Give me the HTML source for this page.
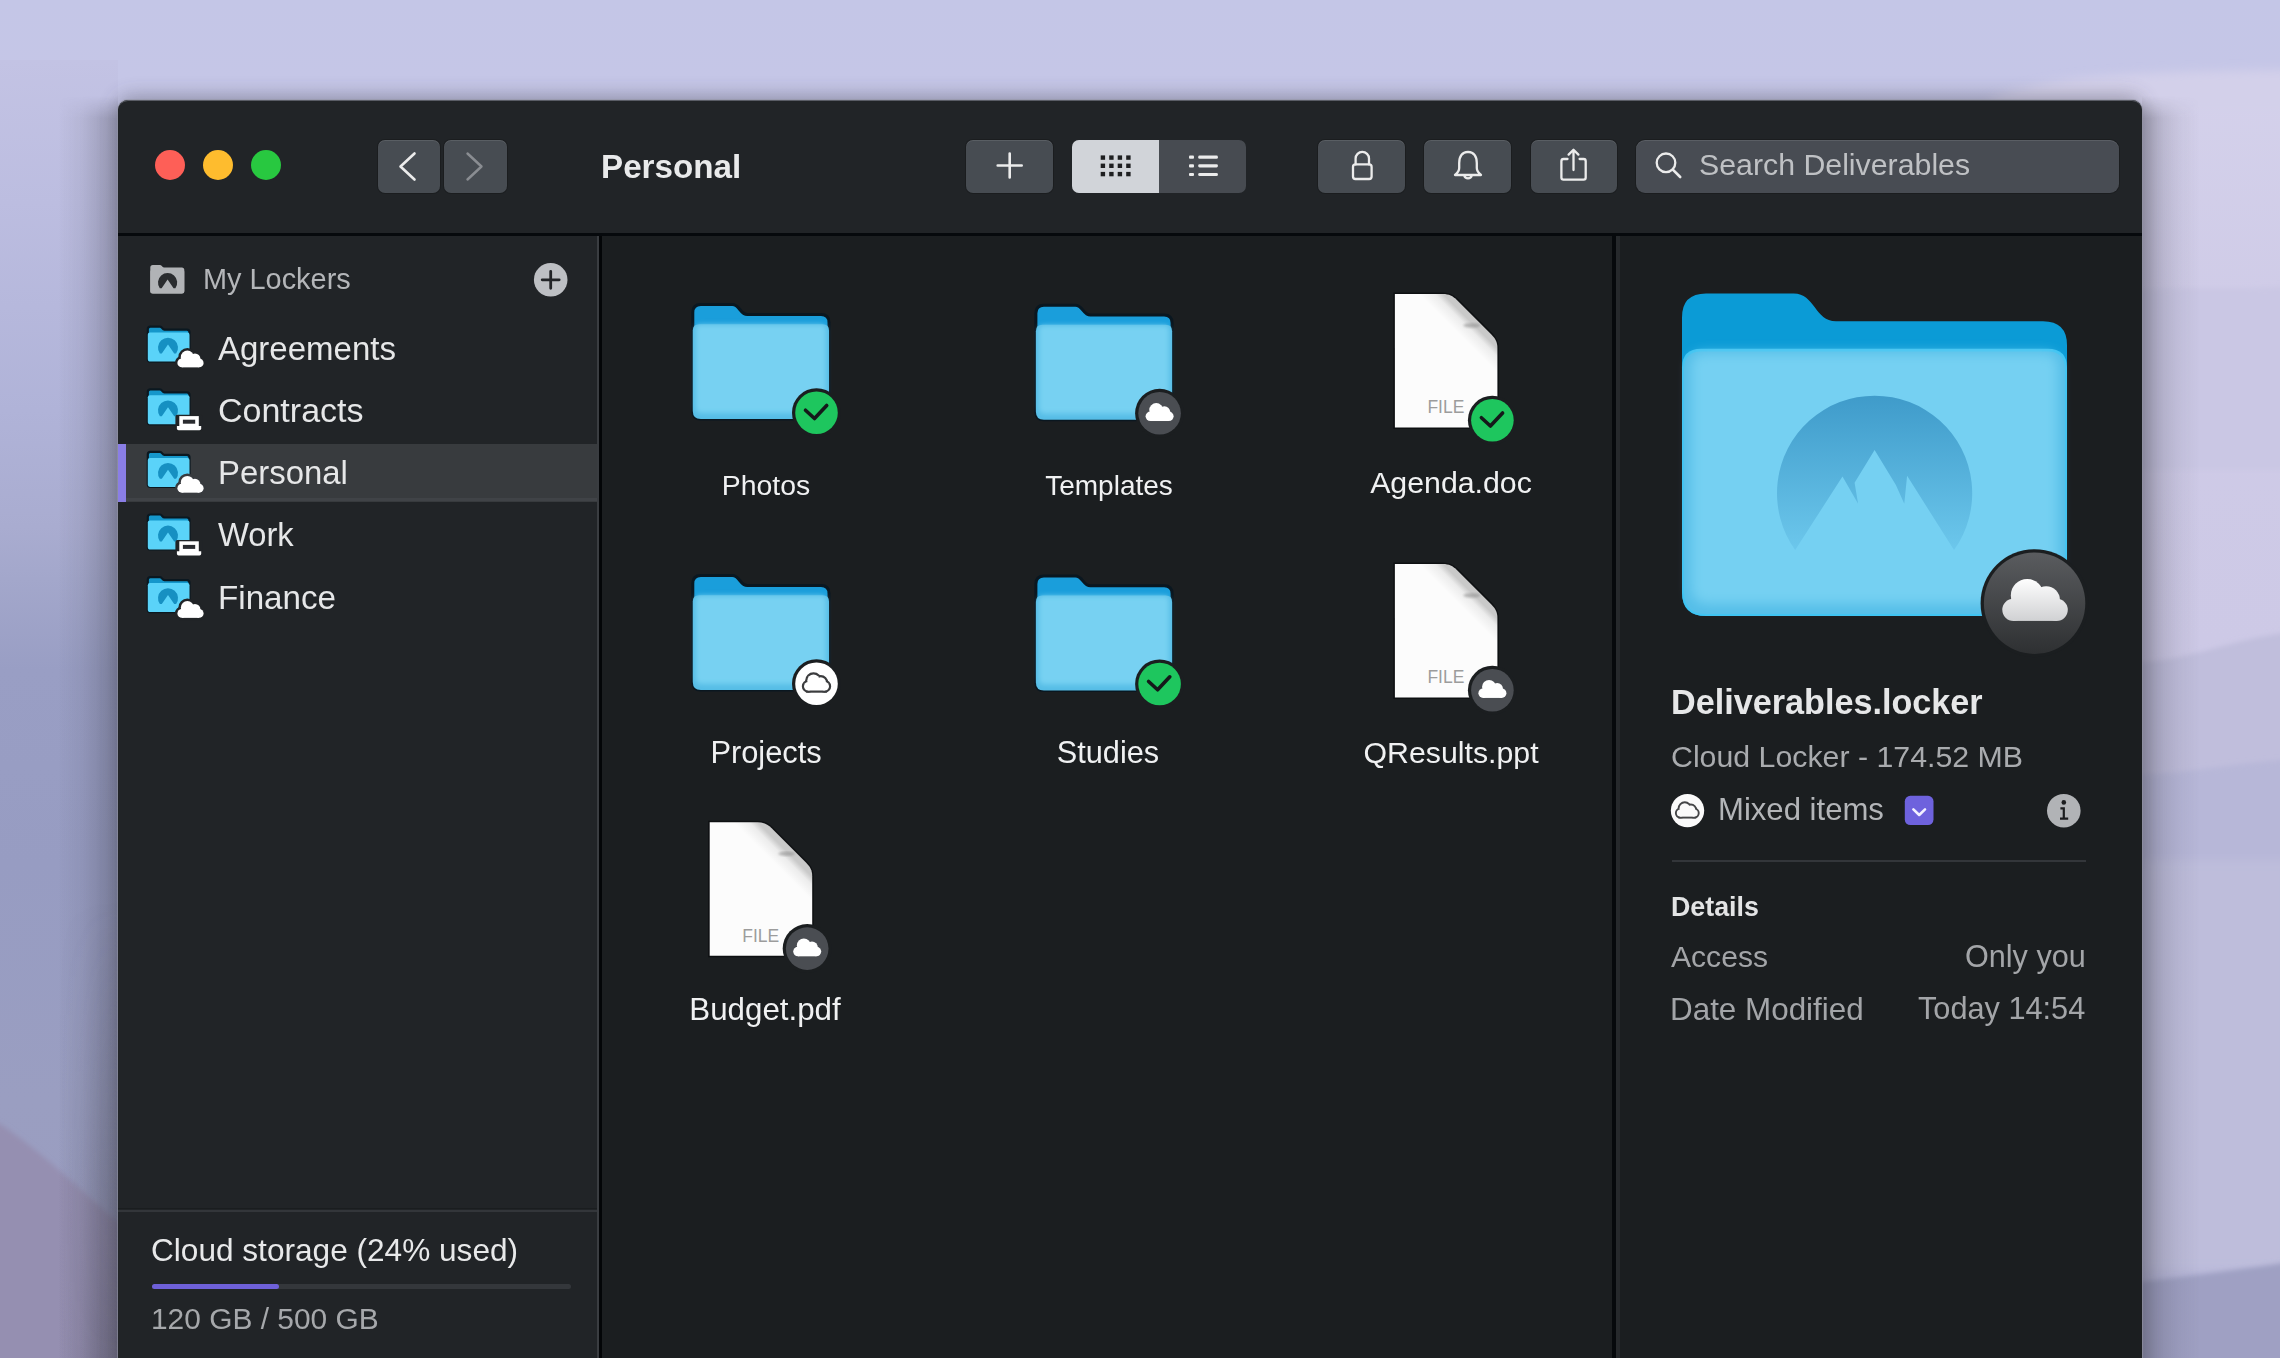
<!DOCTYPE html>
<html><head><meta charset="utf-8">
<style>
*{margin:0;padding:0;box-sizing:border-box}
html,body{width:2280px;height:1358px;overflow:hidden;background:#c0c0e0}
body{position:relative;font-family:"Liberation Sans",sans-serif}
.abs{position:absolute}
.t{position:absolute;white-space:nowrap;line-height:1;will-change:transform}
#win{position:absolute;left:118px;top:100px;width:2024px;height:1300px;border-radius:10px;background:#1b1e20}
</style></head><body>
<svg class="abs" style="left:0;top:0" width="2280" height="1358" viewBox="0 0 2280 1358">
<defs>
<linearGradient id="sky" x1="0" y1="0" x2="0" y2="1">
<stop offset="0" stop-color="#c4c6e7"/><stop offset=".06" stop-color="#c5c6e7"/><stop offset=".2" stop-color="#c3c3e3"/><stop offset=".5" stop-color="#bdbcdc"/><stop offset="1" stop-color="#acaacb"/>
</linearGradient>
<linearGradient id="leftG" gradientUnits="userSpaceOnUse" x1="0" y1="60" x2="0" y2="1358">
<stop offset="0" stop-color="#c3c3e4"/><stop offset=".11" stop-color="#bcbde0"/><stop offset=".27" stop-color="#b0b3d8"/><stop offset=".36" stop-color="#a9acd0"/><stop offset=".4" stop-color="#a3a7cb"/><stop offset=".47" stop-color="#999ec4"/><stop offset=".62" stop-color="#979cc2"/><stop offset=".8" stop-color="#9a9ec1"/><stop offset="1" stop-color="#9a9cbf"/>
</linearGradient>
<linearGradient id="rightG" gradientUnits="userSpaceOnUse" x1="0" y1="60" x2="0" y2="1358">
<stop offset="0" stop-color="#c8c8e7"/><stop offset=".015" stop-color="#d4d1eb"/><stop offset=".2" stop-color="#cfcbe7"/><stop offset=".45" stop-color="#cdc9e6"/><stop offset="1" stop-color="#c9c6e3"/>
</linearGradient>
<linearGradient id="shL" gradientUnits="userSpaceOnUse" x1="118" y1="0" x2="58" y2="0">
<stop offset="0" stop-color="#3a3a44" stop-opacity=".28"/><stop offset=".15" stop-color="#3a3a44" stop-opacity=".24"/><stop offset=".3" stop-color="#3a3a44" stop-opacity=".2"/><stop offset=".6" stop-color="#3a3a44" stop-opacity=".08"/><stop offset="1" stop-color="#3a3a44" stop-opacity="0"/>
</linearGradient>
<linearGradient id="shLb" gradientUnits="userSpaceOnUse" x1="0" y1="900" x2="0" y2="1358">
<stop offset="0" stop-color="#fff" stop-opacity="0"/><stop offset="1" stop-color="#fff" stop-opacity="1"/>
</linearGradient>
<linearGradient id="fadeTop" gradientUnits="userSpaceOnUse" x1="0" y1="96" x2="0" y2="118"><stop offset="0" stop-color="#fff" stop-opacity="0"/><stop offset="1" stop-color="#fff" stop-opacity="1"/></linearGradient>
<mask id="mTop"><rect x="0" y="0" width="2280" height="1358" fill="url(#fadeTop)"/></mask>
<mask id="mLb"><rect x="0" y="900" width="130" height="458" fill="url(#shLb)"/></mask>
<linearGradient id="shR" gradientUnits="userSpaceOnUse" x1="2142" y1="0" x2="2200" y2="0">
<stop offset="0" stop-color="#3a3a44" stop-opacity=".3"/><stop offset=".15" stop-color="#3a3a44" stop-opacity=".26"/><stop offset=".35" stop-color="#3a3a44" stop-opacity=".16"/><stop offset=".65" stop-color="#3a3a44" stop-opacity=".06"/><stop offset="1" stop-color="#3a3a44" stop-opacity="0"/>
</linearGradient>
<linearGradient id="shT" gradientUnits="userSpaceOnUse" x1="0" y1="100" x2="0" y2="70">
<stop offset="0" stop-color="#3a3a44" stop-opacity=".14"/><stop offset="1" stop-color="#3a3a44" stop-opacity="0"/>
</linearGradient>
<filter id="blS" x="-5%" y="-5%" width="110%" height="110%"><feGaussianBlur stdDeviation="10"/></filter>
<filter id="bl" x="-50%" y="-50%" width="200%" height="200%"><feGaussianBlur stdDeviation="5"/></filter>
<filter id="bl3" x="-50%" y="-50%" width="200%" height="200%"><feGaussianBlur stdDeviation="2.5"/></filter>
</defs>
<rect width="2280" height="1358" fill="url(#sky)"/>
<rect x="0" y="60" width="118" height="1298" fill="url(#leftG)"/>
<path d="M-20,1118 L0,1124 C40,1150 80,1190 125,1228 L125,1380 L-20,1380 Z" fill="#958fb1" filter="url(#bl3)"/>
<rect x="2142" y="100" width="138" height="1258" fill="url(#rightG)"/>
<path d="M1990,100 C2040,78 2100,72 2290,70 L2290,110 L1990,110 Z" fill="#d3d0ea" filter="url(#bl)"/>
<path d="M2140,290 C2180,286 2230,290 2290,286 L2290,470 L2140,470 Z" fill="#cac7e4" filter="url(#bl3)"/>
<path d="M2140,662 C2190,660 2230,640 2290,632 L2290,780 L2140,780 Z" fill="#c0bedc" filter="url(#bl3)"/>
<path d="M2140,775 C2200,772 2240,762 2290,760 L2290,1300 L2140,1300 Z" fill="#b7b7d8" filter="url(#bl3)"/>
<path d="M2140,860 L2290,860 L2290,1270 L2140,1270 Z" fill="#bebddb" filter="url(#bl)"/>
<path d="M2140,1282 C2200,1275 2250,1268 2290,1262 L2290,1380 L2140,1380 Z" fill="#9fa0c3" filter="url(#bl3)"/>
<rect x="118" y="97" width="2024" height="1300" rx="12" fill="#3a3a44" opacity=".42" filter="url(#blS)"/>
<rect x="0" y="90" width="118" height="1268" fill="url(#shL)" mask="url(#mTop)"/>
<rect x="0" y="900" width="118" height="458" fill="url(#shL)" mask="url(#mLb)"/>
<rect x="2142" y="90" width="138" height="1268" fill="url(#shR)" mask="url(#mTop)"/>

</svg>
<div class="abs" style="left:117px;top:99px;width:2026px;height:1300px;border-radius:11px;background:rgba(150,152,166,.55)"></div>
<div id="win"></div>
<div class="abs" style="left:118px;top:100px;width:2024px;height:135px;border-radius:10px 10px 0 0;background:#212427;border-top:1px solid #5a5d66"></div>
<div class="abs" style="left:118px;top:233px;width:2024px;height:3px;background:#06090c"></div>
<div class="abs" style="left:118px;top:236px;width:479px;height:1122px;background:#212427"></div>
<div class="abs" style="left:597px;top:236px;width:2px;height:1122px;background:#3a3d41"></div>
<div class="abs" style="left:599px;top:236px;width:3px;height:1122px;background:#030507"></div>
<div class="abs" style="left:1612px;top:236px;width:4px;height:1122px;background:#06090c"></div>
<div class="abs" style="left:1616px;top:236px;width:4px;height:1122px;background:#26292c"></div>
<div class="abs" style="left:118px;top:443.5px;width:479px;height:58.5px;background:#383b3e"></div><div class="abs" style="left:118px;top:498px;width:479px;height:3px;background:#404347"></div>
<div class="abs" style="left:118px;top:444px;width:8px;height:58px;background:#8a7ee6"></div>
<div class="abs" style="left:154.7px;top:150px;width:30px;height:30px;border-radius:50%;background:#fe5f57"></div>
<div class="abs" style="left:202.8px;top:150px;width:30px;height:30px;border-radius:50%;background:#febc2e"></div>
<div class="abs" style="left:251.2px;top:150px;width:30px;height:30px;border-radius:50%;background:#28c840"></div>
<div class="abs" style="left:377.5px;top:139.7px;width:62.5px;height:53.3px;background:#474c52;border-radius:7px;box-shadow:inset 0 1px 0 rgba(255,255,255,.1),0 0 0 1px rgba(0,0,0,.18)"></div>
<div class="abs" style="left:444.2px;top:139.7px;width:63.3px;height:53.3px;background:#474c52;border-radius:7px;box-shadow:inset 0 1px 0 rgba(255,255,255,.1),0 0 0 1px rgba(0,0,0,.18)"></div>
<div class="abs" style="left:966px;top:139.7px;width:86.8px;height:53.3px;background:#474c52;border-radius:7px;box-shadow:inset 0 1px 0 rgba(255,255,255,.1),0 0 0 1px rgba(0,0,0,.18)"></div>
<div class="abs" style="left:1072px;top:139.7px;width:173.5px;height:53.3px;background:#474b51;border-radius:7px;overflow:hidden"><div class="abs" style="left:0;top:0;width:87px;height:54px;background:#d1d4d9"></div></div>
<div class="abs" style="left:1317.7px;top:139.7px;width:87px;height:53.3px;background:#474c52;border-radius:7px;box-shadow:inset 0 1px 0 rgba(255,255,255,.1),0 0 0 1px rgba(0,0,0,.18)"></div>
<div class="abs" style="left:1424.4px;top:139.7px;width:86.3px;height:53.3px;background:#474c52;border-radius:7px;box-shadow:inset 0 1px 0 rgba(255,255,255,.1),0 0 0 1px rgba(0,0,0,.18)"></div>
<div class="abs" style="left:1531px;top:139.7px;width:85.7px;height:53.3px;background:#474c52;border-radius:7px;box-shadow:inset 0 1px 0 rgba(255,255,255,.1),0 0 0 1px rgba(0,0,0,.18)"></div>
<div class="abs" style="left:1636.4px;top:139.7px;width:482.6px;height:53.3px;background:#484c53;border-radius:9px;box-shadow:inset 0 1px 0 rgba(255,255,255,.1),0 0 0 1px rgba(0,0,0,.18)"></div>
<svg class="abs" style="left:0;top:0" width="2280" height="1358" viewBox="0 0 2280 1358"><defs><filter id="fb2" x="-20%" y="-20%" width="140%" height="140%"><feGaussianBlur stdDeviation="2.5"/></filter><filter id="fb6" x="-20%" y="-20%" width="140%" height="140%"><feGaussianBlur stdDeviation="6"/></filter><filter id="fb1"><feGaussianBlur stdDeviation="1.2"/></filter><linearGradient id="logoG" x1="0" y1="0" x2="0" y2="1"><stop offset="0" stop-color="#3f9bca"/><stop offset="1" stop-color="#6cc7ec"/></linearGradient><linearGradient id="bigBadge" x1="0" y1="0" x2="0" y2="1"><stop offset="0" stop-color="#5a5c5f"/><stop offset="1" stop-color="#2e3032"/></linearGradient><linearGradient id="bigCloud" gradientUnits="userSpaceOnUse" x1="0" y1="578" x2="0" y2="622"><stop offset="0" stop-color="#ffffff"/><stop offset="1" stop-color="#cfd0d2"/></linearGradient></defs><g fill="none" stroke-linecap="round" stroke-linejoin="round"><polyline points="414.5,153.5 400.5,166.5 414.5,179.5" stroke="#ececec" stroke-width="2.6"/><polyline points="467.5,153.5 481.5,166.5 467.5,179.5" stroke="#8a8d92" stroke-width="2.4"/><path d="M997.7,165.5 H1021.7 M1009.7,153.5 V177.5" stroke="#ececec" stroke-width="2.6"/></g><rect x="1100.7" y="155.4" width="4.4" height="4.4" fill="#1d1e20"/><rect x="1100.7" y="163.6" width="4.4" height="4.4" fill="#1d1e20"/><rect x="1100.7" y="171.9" width="4.4" height="4.4" fill="#1d1e20"/><rect x="1109.2" y="155.4" width="4.4" height="4.4" fill="#1d1e20"/><rect x="1109.2" y="163.6" width="4.4" height="4.4" fill="#1d1e20"/><rect x="1109.2" y="171.9" width="4.4" height="4.4" fill="#1d1e20"/><rect x="1117.7" y="155.4" width="4.4" height="4.4" fill="#1d1e20"/><rect x="1117.7" y="163.6" width="4.4" height="4.4" fill="#1d1e20"/><rect x="1117.7" y="171.9" width="4.4" height="4.4" fill="#1d1e20"/><rect x="1126.2" y="155.4" width="4.4" height="4.4" fill="#1d1e20"/><rect x="1126.2" y="163.6" width="4.4" height="4.4" fill="#1d1e20"/><rect x="1126.2" y="171.9" width="4.4" height="4.4" fill="#1d1e20"/><rect x="1189" y="155.6" width="5" height="3.2" rx="1" fill="#ececec"/><rect x="1198.2" y="155.6" width="19.7" height="3.2" rx="1.4" fill="#ececec"/><rect x="1189" y="164.2" width="5" height="3.2" rx="1" fill="#ececec"/><rect x="1198.2" y="164.2" width="19.7" height="3.2" rx="1.4" fill="#ececec"/><rect x="1189" y="172.9" width="5" height="3.2" rx="1" fill="#ececec"/><rect x="1198.2" y="172.9" width="19.7" height="3.2" rx="1.4" fill="#ececec"/><g fill="none" stroke="#ececec" stroke-width="2.3" stroke-linecap="round" stroke-linejoin="round"><path d="M1355.6,164.4 V158.6 A6.7,6.7 0 0 1 1369,158.6 V164.4"/><rect x="1353" y="164.4" width="18.6" height="14.6" rx="2.5"/><path d="M1468,151.8 C1461.5,152.3 1459.2,157.5 1459.2,163 V168 C1459.2,171 1457.5,173 1455,175 H1481 C1478.5,173 1476.8,171 1476.8,168 V163 C1476.8,157.5 1474.5,152.3 1468,151.8 Z"/><path d="M1464.3,175.5 A3.8,3.8 0 0 0 1471.7,175.5"/><path d="M1567.5,159 H1563.5 Q1561.4,159 1561.4,161.2 V177.6 Q1561.4,179.7 1563.5,179.7 H1583.6 Q1585.7,179.7 1585.7,177.6 V161.2 Q1585.7,159 1583.6,159 H1579.6"/><path d="M1573.5,170 V149.8 M1568.6,154.6 L1573.5,149.8 L1578.4,154.6"/><circle cx="1666" cy="162.8" r="9.3"/><path d="M1672.8,169.6 L1680.2,177" stroke-width="2.6"/></g><path d="M150.30,290.90 V267.50 Q150.30,265.00 152.80,265.00 H160.16 C162.03,265.00 162.03,267.44 163.90,267.44 H181.80 Q184.30,267.44 184.30,269.94 V290.90 Q184.30,293.40 181.80,293.40 H152.80 Q150.30,293.40 150.30,290.90 Z" fill="#b1b3b6"/><path d="M150.30,271.86 Q150.30,269.86 152.30,269.86 H182.30 Q184.30,269.86 184.30,271.86 V290.90 Q184.30,293.40 181.80,293.40 H152.80 Q150.30,293.40 150.30,290.90 Z" fill="#b1b3b6"/><path d="M159.79,288.21 A9.60,9.60 0 1 1 175.41,288.21 L173.55,288.21 L167.60,279.53 L161.65,288.21 Z" fill="#2a2c2f"/><circle cx="550.7" cy="279.8" r="16.8" fill="#bdbfc3"/><path d="M542.2,279.8 H559.2 M550.7,271.3 V288.3" stroke="#222427" stroke-width="2.8" stroke-linecap="round"/><path d="M147.80,359.00 V329.20 Q147.80,326.60 150.40,326.60 H159.89 C162.19,326.60 162.19,329.61 164.48,329.61 H186.90 Q189.50,329.61 189.50,332.21 V359.00 Q189.50,361.60 186.90,361.60 H150.40 Q147.80,361.60 147.80,359.00 Z" fill="#1597cb" stroke="#0b1820" stroke-width="2.2"/><path d="M147.80,334.67 Q147.80,332.59 149.88,332.59 H187.42 Q189.50,332.59 189.50,334.67 V359.00 Q189.50,361.60 186.90,361.60 H150.40 Q147.80,361.60 147.80,359.00 Z" fill="#5ad3f9"/><path d="M159.87,353.54 A10.00,10.00 0 1 1 176.13,353.54 L174.20,353.54 L168.00,344.50 L161.80,353.54 Z" fill="#1690c2"/><circle cx="181.85" cy="362.91" r="4.45" fill="#212427" stroke="#212427" stroke-width="5"/><circle cx="187.36" cy="357.15" r="6.55" fill="#212427" stroke="#212427" stroke-width="5"/><circle cx="194.95" cy="358.98" r="5.50" fill="#212427" stroke="#212427" stroke-width="5"/><circle cx="199.15" cy="362.91" r="4.45" fill="#212427" stroke="#212427" stroke-width="5"/><rect x="181.85" y="361.08" width="17.29" height="6.29" fill="#212427" stroke="#212427" stroke-width="5"/><circle cx="181.85" cy="362.91" r="4.45" fill="#ffffff"/><circle cx="187.36" cy="357.15" r="6.55" fill="#ffffff"/><circle cx="194.95" cy="358.98" r="5.50" fill="#ffffff"/><circle cx="199.15" cy="362.91" r="4.45" fill="#ffffff"/><rect x="181.85" y="361.08" width="17.29" height="6.29" fill="#ffffff"/><path d="M147.80,421.70 V391.90 Q147.80,389.30 150.40,389.30 H159.89 C162.19,389.30 162.19,392.31 164.48,392.31 H186.90 Q189.50,392.31 189.50,394.91 V421.70 Q189.50,424.30 186.90,424.30 H150.40 Q147.80,424.30 147.80,421.70 Z" fill="#1597cb" stroke="#0b1820" stroke-width="2.2"/><path d="M147.80,397.37 Q147.80,395.29 149.88,395.29 H187.42 Q189.50,395.29 189.50,397.37 V421.70 Q189.50,424.30 186.90,424.30 H150.40 Q147.80,424.30 147.80,421.70 Z" fill="#5ad3f9"/><path d="M159.87,416.24 A10.00,10.00 0 1 1 176.13,416.24 L174.20,416.24 L168.00,407.20 L161.80,416.24 Z" fill="#1690c2"/><rect x="175.4" y="414.8" width="27.5" height="16.5" rx="2" fill="#212427"/><rect x="181.1" y="417.9" width="15.9" height="7.6" fill="#2a2c30" stroke="#ffffff" stroke-width="3.6"/><path d="M176.9,426.0 H201.2 V428.5 Q201.2,430.2 199.5,430.2 H178.6 Q176.9,430.2 176.9,428.5 Z" fill="#ffffff"/><path d="M147.80,484.30 V454.50 Q147.80,451.90 150.40,451.90 H159.89 C162.19,451.90 162.19,454.91 164.48,454.91 H186.90 Q189.50,454.91 189.50,457.51 V484.30 Q189.50,486.90 186.90,486.90 H150.40 Q147.80,486.90 147.80,484.30 Z" fill="#1597cb" stroke="#0b1820" stroke-width="2.2"/><path d="M147.80,459.96 Q147.80,457.88 149.88,457.88 H187.42 Q189.50,457.88 189.50,459.96 V484.30 Q189.50,486.90 186.90,486.90 H150.40 Q147.80,486.90 147.80,484.30 Z" fill="#5ad3f9"/><path d="M159.87,478.84 A10.00,10.00 0 1 1 176.13,478.84 L174.20,478.84 L168.00,469.80 L161.80,478.84 Z" fill="#1690c2"/><circle cx="181.85" cy="488.21" r="4.45" fill="#383b3f" stroke="#383b3f" stroke-width="5"/><circle cx="187.36" cy="482.45" r="6.55" fill="#383b3f" stroke="#383b3f" stroke-width="5"/><circle cx="194.95" cy="484.28" r="5.50" fill="#383b3f" stroke="#383b3f" stroke-width="5"/><circle cx="199.15" cy="488.21" r="4.45" fill="#383b3f" stroke="#383b3f" stroke-width="5"/><rect x="181.85" y="486.38" width="17.29" height="6.29" fill="#383b3f" stroke="#383b3f" stroke-width="5"/><circle cx="181.85" cy="488.21" r="4.45" fill="#ffffff"/><circle cx="187.36" cy="482.45" r="6.55" fill="#ffffff"/><circle cx="194.95" cy="484.28" r="5.50" fill="#ffffff"/><circle cx="199.15" cy="488.21" r="4.45" fill="#ffffff"/><rect x="181.85" y="486.38" width="17.29" height="6.29" fill="#ffffff"/><path d="M147.80,546.90 V517.10 Q147.80,514.50 150.40,514.50 H159.89 C162.19,514.50 162.19,517.51 164.48,517.51 H186.90 Q189.50,517.51 189.50,520.11 V546.90 Q189.50,549.50 186.90,549.50 H150.40 Q147.80,549.50 147.80,546.90 Z" fill="#1597cb" stroke="#0b1820" stroke-width="2.2"/><path d="M147.80,522.57 Q147.80,520.49 149.88,520.49 H187.42 Q189.50,520.49 189.50,522.57 V546.90 Q189.50,549.50 186.90,549.50 H150.40 Q147.80,549.50 147.80,546.90 Z" fill="#5ad3f9"/><path d="M159.87,541.44 A10.00,10.00 0 1 1 176.13,541.44 L174.20,541.44 L168.00,532.40 L161.80,541.44 Z" fill="#1690c2"/><rect x="175.4" y="540.0" width="27.5" height="16.5" rx="2" fill="#212427"/><rect x="181.1" y="543.1" width="15.9" height="7.6" fill="#2a2c30" stroke="#ffffff" stroke-width="3.6"/><path d="M176.9,551.2 H201.2 V553.7 Q201.2,555.4 199.5,555.4 H178.6 Q176.9,555.4 176.9,553.7 Z" fill="#ffffff"/><path d="M147.80,609.50 V579.70 Q147.80,577.10 150.40,577.10 H159.89 C162.19,577.10 162.19,580.11 164.48,580.11 H186.90 Q189.50,580.11 189.50,582.71 V609.50 Q189.50,612.10 186.90,612.10 H150.40 Q147.80,612.10 147.80,609.50 Z" fill="#1597cb" stroke="#0b1820" stroke-width="2.2"/><path d="M147.80,585.17 Q147.80,583.09 149.88,583.09 H187.42 Q189.50,583.09 189.50,585.17 V609.50 Q189.50,612.10 186.90,612.10 H150.40 Q147.80,612.10 147.80,609.50 Z" fill="#5ad3f9"/><path d="M159.87,604.04 A10.00,10.00 0 1 1 176.13,604.04 L174.20,604.04 L168.00,595.00 L161.80,604.04 Z" fill="#1690c2"/><circle cx="181.85" cy="613.41" r="4.45" fill="#212427" stroke="#212427" stroke-width="5"/><circle cx="187.36" cy="607.65" r="6.55" fill="#212427" stroke="#212427" stroke-width="5"/><circle cx="194.95" cy="609.48" r="5.50" fill="#212427" stroke="#212427" stroke-width="5"/><circle cx="199.15" cy="613.41" r="4.45" fill="#212427" stroke="#212427" stroke-width="5"/><rect x="181.85" y="611.58" width="17.29" height="6.29" fill="#212427" stroke="#212427" stroke-width="5"/><circle cx="181.85" cy="613.41" r="4.45" fill="#ffffff"/><circle cx="187.36" cy="607.65" r="6.55" fill="#ffffff"/><circle cx="194.95" cy="609.48" r="5.50" fill="#ffffff"/><circle cx="199.15" cy="613.41" r="4.45" fill="#ffffff"/><rect x="181.85" y="611.58" width="17.29" height="6.29" fill="#ffffff"/><path d="M692.80,411.10 V312.60 Q692.80,304.60 700.80,304.60 H732.30 C739.79,304.60 739.79,314.45 747.28,314.45 H821.00 Q829.00,314.45 829.00,322.45 V411.10 Q829.00,419.10 821.00,419.10 H700.80 Q692.80,419.10 692.80,411.10 Z" fill="#1a9edb" stroke="#0a1720" stroke-width="3"/><path d="M692.80,330.58 Q692.80,324.18 699.20,324.18 H822.60 Q829.00,324.18 829.00,330.58 V411.10 Q829.00,419.10 821.00,419.10 H700.80 Q692.80,419.10 692.80,411.10 Z" fill="#56bde6"/><path d="M695.80,329.61 Q695.80,324.81 700.60,324.81 H821.20 Q826.00,324.81 826.00,329.61 V407.10 Q826.00,413.10 820.00,413.10 H701.80 Q695.80,413.10 695.80,407.10 Z" fill="#77d1f2" filter="url(#fb2)"/><circle cx="816.5" cy="412.7" r="24.5" fill="#1b1e20"/><circle cx="816.5" cy="412.7" r="21.3" fill="#1ec65e"/><polyline points="805.5,410.2 814.5,418.5 826.7,405.5" fill="none" stroke="#15181a" stroke-width="3.6" stroke-linecap="round" stroke-linejoin="round"/><path d="M1035.90,411.70 V313.20 Q1035.90,305.20 1043.90,305.20 H1075.40 C1082.89,305.20 1082.89,315.05 1090.38,315.05 H1164.10 Q1172.10,315.05 1172.10,323.05 V411.70 Q1172.10,419.70 1164.10,419.70 H1043.90 Q1035.90,419.70 1035.90,411.70 Z" fill="#1a9edb" stroke="#0a1720" stroke-width="3"/><path d="M1035.90,331.18 Q1035.90,324.78 1042.30,324.78 H1165.70 Q1172.10,324.78 1172.10,331.18 V411.70 Q1172.10,419.70 1164.10,419.70 H1043.90 Q1035.90,419.70 1035.90,411.70 Z" fill="#56bde6"/><path d="M1038.90,330.21 Q1038.90,325.41 1043.70,325.41 H1164.30 Q1169.10,325.41 1169.10,330.21 V407.70 Q1169.10,413.70 1163.10,413.70 H1044.90 Q1038.90,413.70 1038.90,407.70 Z" fill="#77d1f2" filter="url(#fb2)"/><circle cx="1159.6" cy="413.3" r="24.5" fill="#1b1e20"/><circle cx="1159.6" cy="413.3" r="21.3" fill="#4a4d52"/><circle cx="1150.36" cy="416.26" r="4.76" fill="#ffffff"/><circle cx="1156.24" cy="410.10" r="7.00" fill="#ffffff"/><circle cx="1164.36" cy="412.06" r="5.88" fill="#ffffff"/><circle cx="1168.84" cy="416.26" r="4.76" fill="#ffffff"/><rect x="1150.36" y="414.30" width="18.48" height="6.72" fill="#ffffff"/><path d="M692.80,682.10 V583.60 Q692.80,575.60 700.80,575.60 H732.30 C739.79,575.60 739.79,585.45 747.28,585.45 H821.00 Q829.00,585.45 829.00,593.45 V682.10 Q829.00,690.10 821.00,690.10 H700.80 Q692.80,690.10 692.80,682.10 Z" fill="#1a9edb" stroke="#0a1720" stroke-width="3"/><path d="M692.80,601.58 Q692.80,595.18 699.20,595.18 H822.60 Q829.00,595.18 829.00,601.58 V682.10 Q829.00,690.10 821.00,690.10 H700.80 Q692.80,690.10 692.80,682.10 Z" fill="#56bde6"/><path d="M695.80,600.61 Q695.80,595.81 700.60,595.81 H821.20 Q826.00,595.81 826.00,600.61 V678.10 Q826.00,684.10 820.00,684.10 H701.80 Q695.80,684.10 695.80,678.10 Z" fill="#77d1f2" filter="url(#fb2)"/><circle cx="816.5" cy="683.7" r="24.5" fill="#1b1e20"/><circle cx="816.5" cy="683.7" r="21.3" fill="#ffffff"/><circle cx="808.25" cy="686.25" r="4.25" fill="#3b3c3e" stroke="#3b3c3e" stroke-width="4.4"/><circle cx="813.50" cy="680.75" r="6.25" fill="#3b3c3e" stroke="#3b3c3e" stroke-width="4.4"/><circle cx="820.75" cy="682.50" r="5.25" fill="#3b3c3e" stroke="#3b3c3e" stroke-width="4.4"/><circle cx="824.75" cy="686.25" r="4.25" fill="#3b3c3e" stroke="#3b3c3e" stroke-width="4.4"/><rect x="808.25" y="684.50" width="16.50" height="6.00" fill="#3b3c3e" stroke="#3b3c3e" stroke-width="4.4"/><circle cx="808.25" cy="686.25" r="4.25" fill="#ffffff"/><circle cx="813.50" cy="680.75" r="6.25" fill="#ffffff"/><circle cx="820.75" cy="682.50" r="5.25" fill="#ffffff"/><circle cx="824.75" cy="686.25" r="4.25" fill="#ffffff"/><rect x="808.25" y="684.50" width="16.50" height="6.00" fill="#ffffff"/><path d="M1035.90,682.40 V583.90 Q1035.90,575.90 1043.90,575.90 H1075.40 C1082.89,575.90 1082.89,585.75 1090.38,585.75 H1164.10 Q1172.10,585.75 1172.10,593.75 V682.40 Q1172.10,690.40 1164.10,690.40 H1043.90 Q1035.90,690.40 1035.90,682.40 Z" fill="#1a9edb" stroke="#0a1720" stroke-width="3"/><path d="M1035.90,601.88 Q1035.90,595.48 1042.30,595.48 H1165.70 Q1172.10,595.48 1172.10,601.88 V682.40 Q1172.10,690.40 1164.10,690.40 H1043.90 Q1035.90,690.40 1035.90,682.40 Z" fill="#56bde6"/><path d="M1038.90,600.91 Q1038.90,596.11 1043.70,596.11 H1164.30 Q1169.10,596.11 1169.10,600.91 V678.40 Q1169.10,684.40 1163.10,684.40 H1044.90 Q1038.90,684.40 1038.90,678.40 Z" fill="#77d1f2" filter="url(#fb2)"/><circle cx="1159.6" cy="684.0" r="24.5" fill="#1b1e20"/><circle cx="1159.6" cy="684.0" r="21.3" fill="#1ec65e"/><polyline points="1148.6,681.5 1157.6,689.8 1169.8,676.8" fill="none" stroke="#15181a" stroke-width="3.6" stroke-linecap="round" stroke-linejoin="round"/><defs><linearGradient id="fg1394293" gradientUnits="userSpaceOnUse" x1="1470.9" y1="321.9" x2="1458.9" y2="333.9"><stop offset="0" stop-color="#c9c9c9"/><stop offset=".35" stop-color="#ececec"/><stop offset="1" stop-color="#fcfcfc"/></linearGradient></defs><path d="M1394.90,293.90 H1442.90 C1448.90,293.90 1452.90,295.90 1456.90,299.90 L1490.90,333.90 C1495.40,338.40 1497.40,341.90 1497.40,347.90 V427.40 H1394.90 Z" fill="#fcfcfc" stroke="#0e1012" stroke-width="3"/><path d="M1394.90,293.90 H1442.90 C1448.90,293.90 1452.90,295.90 1456.90,299.90 L1490.90,333.90 C1495.40,338.40 1497.40,341.90 1497.40,347.90 V427.40 H1394.90 Z" fill="url(#fg1394293)"/><ellipse cx="1471.9" cy="325.4" rx="8.5" ry="2.2" fill="#8c8c8c" opacity=".55" filter="url(#fb1)"/><text x="1445.9" y="413.2" font-family="Liberation Sans" font-size="17.5" fill="#9c9c9c" text-anchor="middle">FILE</text><circle cx="1492.4" cy="420.2" r="24.5" fill="#1b1e20"/><circle cx="1492.4" cy="420.2" r="21.3" fill="#1ec65e"/><polyline points="1481.4,417.7 1490.4,426.0 1502.6,413.0" fill="none" stroke="#15181a" stroke-width="3.6" stroke-linecap="round" stroke-linejoin="round"/><defs><linearGradient id="fg1394563" gradientUnits="userSpaceOnUse" x1="1470.9" y1="591.9" x2="1458.9" y2="603.9"><stop offset="0" stop-color="#c9c9c9"/><stop offset=".35" stop-color="#ececec"/><stop offset="1" stop-color="#fcfcfc"/></linearGradient></defs><path d="M1394.90,563.90 H1442.90 C1448.90,563.90 1452.90,565.90 1456.90,569.90 L1490.90,603.90 C1495.40,608.40 1497.40,611.90 1497.40,617.90 V697.40 H1394.90 Z" fill="#fcfcfc" stroke="#0e1012" stroke-width="3"/><path d="M1394.90,563.90 H1442.90 C1448.90,563.90 1452.90,565.90 1456.90,569.90 L1490.90,603.90 C1495.40,608.40 1497.40,611.90 1497.40,617.90 V697.40 H1394.90 Z" fill="url(#fg1394563)"/><ellipse cx="1471.9" cy="595.4" rx="8.5" ry="2.2" fill="#8c8c8c" opacity=".55" filter="url(#fb1)"/><text x="1445.9" y="683.2" font-family="Liberation Sans" font-size="17.5" fill="#9c9c9c" text-anchor="middle">FILE</text><circle cx="1492.4" cy="690.2" r="24.5" fill="#1b1e20"/><circle cx="1492.4" cy="690.2" r="21.3" fill="#4a4d52"/><circle cx="1483.16" cy="693.16" r="4.76" fill="#ffffff"/><circle cx="1489.04" cy="687.00" r="7.00" fill="#ffffff"/><circle cx="1497.16" cy="688.96" r="5.88" fill="#ffffff"/><circle cx="1501.64" cy="693.16" r="4.76" fill="#ffffff"/><rect x="1483.16" y="691.20" width="18.48" height="6.72" fill="#ffffff"/><defs><linearGradient id="fg709822" gradientUnits="userSpaceOnUse" x1="785.7" y1="850.3" x2="773.7" y2="862.3"><stop offset="0" stop-color="#c9c9c9"/><stop offset=".35" stop-color="#ececec"/><stop offset="1" stop-color="#fcfcfc"/></linearGradient></defs><path d="M709.70,822.30 H757.70 C763.70,822.30 767.70,824.30 771.70,828.30 L805.70,862.30 C810.20,866.80 812.20,870.30 812.20,876.30 V955.80 H709.70 Z" fill="#fcfcfc" stroke="#0e1012" stroke-width="3"/><path d="M709.70,822.30 H757.70 C763.70,822.30 767.70,824.30 771.70,828.30 L805.70,862.30 C810.20,866.80 812.20,870.30 812.20,876.30 V955.80 H709.70 Z" fill="url(#fg709822)"/><ellipse cx="786.7" cy="853.8" rx="8.5" ry="2.2" fill="#8c8c8c" opacity=".55" filter="url(#fb1)"/><text x="760.7" y="941.6" font-family="Liberation Sans" font-size="17.5" fill="#9c9c9c" text-anchor="middle">FILE</text><circle cx="807.2" cy="948.6" r="24.5" fill="#1b1e20"/><circle cx="807.2" cy="948.6" r="21.3" fill="#4a4d52"/><circle cx="797.96" cy="951.56" r="4.76" fill="#ffffff"/><circle cx="803.84" cy="945.40" r="7.00" fill="#ffffff"/><circle cx="811.96" cy="947.36" r="5.88" fill="#ffffff"/><circle cx="816.44" cy="951.56" r="4.76" fill="#ffffff"/><rect x="797.96" y="949.60" width="18.48" height="6.72" fill="#ffffff"/><path d="M1682.00,592.00 V317.50 Q1682.00,293.50 1706.00,293.50 H1793.65 C1814.83,293.50 1814.83,321.24 1836.00,321.24 H2043.00 Q2067.00,321.24 2067.00,345.24 V592.00 Q2067.00,616.00 2043.00,616.00 H1706.00 Q1682.00,616.00 1682.00,592.00 Z" fill="#0b9bd6"/><path d="M1682.00,367.85 Q1682.00,348.65 1701.20,348.65 H2047.80 Q2067.00,348.65 2067.00,367.85 V592.00 Q2067.00,616.00 2043.00,616.00 H1706.00 Q1682.00,616.00 1682.00,592.00 Z" fill="#3fc4f2"/><path d="M1684.00,369.22 Q1684.00,351.62 1701.60,351.62 H2047.40 Q2065.00,351.62 2065.00,369.22 V592.00 Q2065.00,614.00 2043.00,614.00 H1706.00 Q1684.00,614.00 1684.00,592.00 Z" fill="#55bee8"/><path d="M1691.00,367.63 Q1691.00,353.23 1705.40,353.23 H2043.60 Q2058.00,353.23 2058.00,367.63 V586.00 Q2058.00,604.00 2040.00,604.00 H1709.00 Q1691.00,604.00 1691.00,586.00 Z" fill="#74d0f2" filter="url(#fb6)"/><path d="M1795.20,550.00 A97.60,97.60 0 1 1 1954.00,550.00 L1907.10,475.82 L1904.27,503.83 L1895.88,484.90 L1874.60,450.00 L1854.59,482.80 L1858.11,503.83 L1842.49,476.51 L1795.20,550.00 Z" fill="url(#logoG)"/><circle cx="2034.6" cy="603.2" r="54" fill="#1b1e20"/><circle cx="2034.6" cy="603.2" r="50.7" fill="url(#bigBadge)"/><circle cx="2013.43" cy="609.78" r="11.13" fill="url(#bigCloud)"/><circle cx="2027.19" cy="595.38" r="16.38" fill="url(#bigCloud)"/><circle cx="2046.18" cy="599.96" r="13.76" fill="url(#bigCloud)"/><circle cx="2056.66" cy="609.78" r="11.13" fill="url(#bigCloud)"/><rect x="2013.43" y="605.20" width="43.23" height="15.72" fill="url(#bigCloud)"/><circle cx="1687.5" cy="810.6" r="16.7" fill="#fafafa"/><circle cx="1680.37" cy="813.07" r="3.57" fill="#444547" stroke="#444547" stroke-width="3.8"/><circle cx="1684.78" cy="808.45" r="5.25" fill="#444547" stroke="#444547" stroke-width="3.8"/><circle cx="1690.87" cy="809.92" r="4.41" fill="#444547" stroke="#444547" stroke-width="3.8"/><circle cx="1694.23" cy="813.07" r="3.57" fill="#444547" stroke="#444547" stroke-width="3.8"/><rect x="1680.37" y="811.60" width="13.86" height="5.04" fill="#444547" stroke="#444547" stroke-width="3.8"/><circle cx="1680.37" cy="813.07" r="3.57" fill="#fafafa"/><circle cx="1684.78" cy="808.45" r="5.25" fill="#fafafa"/><circle cx="1690.87" cy="809.92" r="4.41" fill="#fafafa"/><circle cx="1694.23" cy="813.07" r="3.57" fill="#fafafa"/><rect x="1680.37" y="811.60" width="13.86" height="5.04" fill="#fafafa"/><rect x="1904.8" y="795.8" width="28.7" height="29.2" rx="5.5" fill="#6e62dd"/><polyline points="1913.4,809.4 1919.2,815 1925,809.4" fill="none" stroke="#f2f0ff" stroke-width="2.6" stroke-linecap="round" stroke-linejoin="round"/><circle cx="2063.8" cy="810.7" r="16.8" fill="#b1b3b6"/><circle cx="2063.8" cy="802.4" r="2.3" fill="#1c1d1f"/><path d="M2060.4,808.3 H2063.8 V818.6 M2060,818.6 H2068.2" fill="none" stroke="#1c1d1f" stroke-width="2.2"/></svg>
<div class="t" style="left:600.5px;top:150.1px;font-size:33.2px;color:#e9eaeb;font-weight:700;">Personal</div>
<div class="t" style="left:1699.0px;top:150.4px;font-size:30.3px;color:#bfc1c4;font-weight:400;">Search Deliverables</div>
<div class="t" style="left:202.5px;top:265.3px;font-size:28.9px;color:#b4b6b9;font-weight:400;">My Lockers</div>
<div class="t" style="left:217.5px;top:331.5px;font-size:33px;color:#e6e7e8;font-weight:400;">Agreements</div>
<div class="t" style="left:217.5px;top:392.8px;font-size:34px;color:#e6e7e8;font-weight:400;">Contracts</div>
<div class="t" style="left:217.5px;top:456.6px;font-size:32.9px;color:#e6e7e8;font-weight:400;">Personal</div>
<div class="t" style="left:217.5px;top:519.2px;font-size:32.7px;color:#e6e7e8;font-weight:400;">Work</div>
<div class="t" style="left:217.5px;top:581.3px;font-size:33.2px;color:#e6e7e8;font-weight:400;">Finance</div>
<div class="abs" style="left:118px;top:1208px;width:479px;height:1px;background:#1a1d1f"></div><div class="abs" style="left:118px;top:1210px;width:479px;height:2px;background:#33363a"></div>
<div class="t" style="left:151.0px;top:1235.0px;font-size:31.6px;color:#e8e9ea;font-weight:400;">Cloud storage (24% used)</div>
<div class="abs" style="left:152px;top:1283.5px;width:419px;height:5px;border-radius:3px;background:#34373b"></div>
<div class="abs" style="left:152px;top:1283.5px;width:127px;height:5px;border-radius:3px;background:#6e60d8"></div>
<div class="t" style="left:150.5px;top:1304.4px;font-size:29.9px;color:#a6a8ab;font-weight:400;">120 GB / 500 GB</div>
<div class="t" style="left:166.2px;width:1200px;text-align:center;top:470.6px;font-size:28.4px;color:#f0f1f2;font-weight:400;">Photos</div>
<div class="t" style="left:508.5px;width:1200px;text-align:center;top:471.9px;font-size:28px;color:#f0f1f2;font-weight:400;">Templates</div>
<div class="t" style="left:851.0px;width:1200px;text-align:center;top:467.9px;font-size:30.3px;color:#f0f1f2;font-weight:400;">Agenda.doc</div>
<div class="t" style="left:165.9px;width:1200px;text-align:center;top:737.7px;font-size:30.8px;color:#f0f1f2;font-weight:400;">Projects</div>
<div class="t" style="left:508.2px;width:1200px;text-align:center;top:737.6px;font-size:30.7px;color:#f0f1f2;font-weight:400;">Studies</div>
<div class="t" style="left:851.0px;width:1200px;text-align:center;top:738.0px;font-size:30.3px;color:#f0f1f2;font-weight:400;">QResults.ppt</div>
<div class="t" style="left:165.2px;width:1200px;text-align:center;top:994.1px;font-size:31.3px;color:#f0f1f2;font-weight:400;">Budget.pdf</div>
<div class="t" style="left:1670.8px;top:685.2px;font-size:34.2px;color:#e6e7e8;font-weight:700;">Deliverables.locker</div>
<div class="t" style="left:1670.8px;top:741.8px;font-size:30.3px;color:#a9abae;font-weight:400;">Cloud Locker - 174.52 MB</div>
<div class="t" style="left:1718.0px;top:794.2px;font-size:31.1px;color:#b3b5b8;font-weight:400;">Mixed items</div>
<div class="abs" style="left:1672px;top:860px;width:414px;height:2px;background:#33363a"></div>
<div class="t" style="left:1670.5px;top:894.1px;font-size:26.8px;color:#e3e4e5;font-weight:700;">Details</div>
<div class="t" style="left:1670.5px;top:941.6px;font-size:30.1px;color:#a3a5a8;font-weight:400;">Access</div>
<div class="t" style="right:194.0px;top:941.2px;font-size:30.6px;color:#a3a5a8;font-weight:400;">Only you</div>
<div class="t" style="left:1670.0px;top:993.7px;font-size:31.4px;color:#a3a5a8;font-weight:400;">Date Modified</div>
<div class="t" style="right:194.5px;top:994.3px;font-size:30.7px;color:#a3a5a8;font-weight:400;">Today 14:54</div>
</body></html>
